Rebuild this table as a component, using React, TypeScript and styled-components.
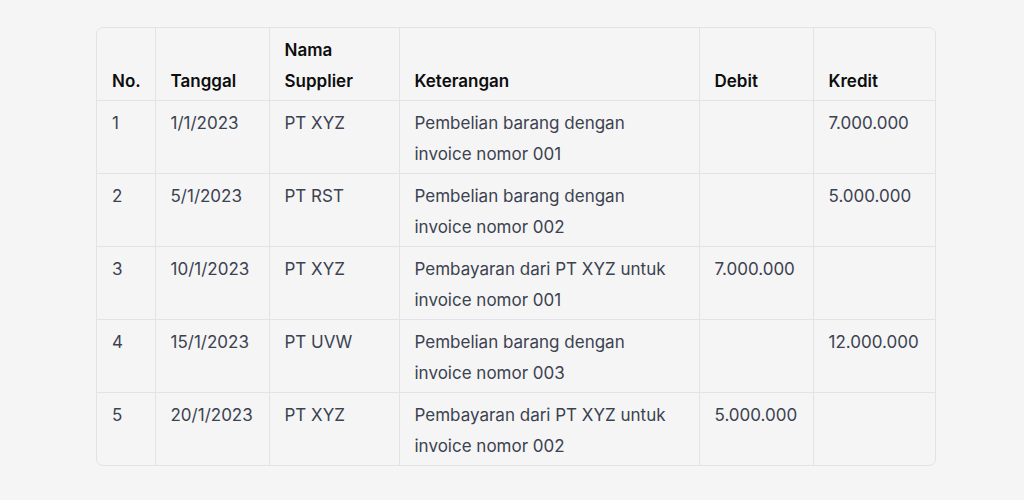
import React from 'react'
import styled, { createGlobalStyle } from 'styled-components'

const GlobalStyle = createGlobalStyle`
  html, body {
    margin: 0;
    padding: 0;
    background: #f5f5f5;
  }
  body {
    font-family: Inter, 'Noto Sans', 'Liberation Sans', sans-serif;
    -webkit-font-smoothing: antialiased;
  }
`

const Page = styled.div`
  width: 1024px;
  height: 500px;
  box-sizing: border-box;
  padding: 27px 0 0 96px;
`

const TableWrap = styled.div`
  width: 840px;
  box-sizing: border-box;
  border: 1px solid #e3e3e7;
  border-radius: 7px;
  overflow: hidden;
`

const Table = styled.table`
  width: 100%;
  border-collapse: collapse;
  table-layout: fixed;
  font-size: 17px;
  line-height: 31px;
`

const Th = styled.th`
  text-align: left;
  vertical-align: bottom;
  font-weight: 600;
  color: #0d0d0d;
  padding: 7px 15px 3px 15px;
  border-right: 1px solid #e3e3e7;
  border-bottom: 1px solid #e3e3e7;
  &:last-child {
    border-right: none;
  }
`

const Row = styled.tr`
  &:last-child td {
    border-bottom: none;
  }
`

const Td = styled.td`
  vertical-align: top;
  color: #3b4250;
  padding: 7px 15px 3px 15px;
  border-right: 1px solid #e3e3e7;
  border-bottom: 1px solid #e3e3e7;
  &:last-child {
    border-right: none;
  }
`

type Entry = {
  no: string
  date: string
  supplier: string
  note: string
  debit: string
  kredit: string
}

const columns = [
  { label: 'No.', width: 58 },
  { label: 'Tanggal', width: 114 },
  { label: 'Nama Supplier', width: 130 },
  { label: 'Keterangan', width: 300 },
  { label: 'Debit', width: 114 },
  { label: 'Kredit', width: 122 },
]

const entries: Entry[] = [
  { no: '1', date: '1/1/2023', supplier: 'PT XYZ', note: 'Pembelian barang dengan invoice nomor 001', debit: '', kredit: '7.000.000' },
  { no: '2', date: '5/1/2023', supplier: 'PT RST', note: 'Pembelian barang dengan invoice nomor 002', debit: '', kredit: '5.000.000' },
  { no: '3', date: '10/1/2023', supplier: 'PT XYZ', note: 'Pembayaran dari PT XYZ untuk invoice nomor 001', debit: '7.000.000', kredit: '' },
  { no: '4', date: '15/1/2023', supplier: 'PT UVW', note: 'Pembelian barang dengan invoice nomor 003', debit: '', kredit: '12.000.000' },
  { no: '5', date: '20/1/2023', supplier: 'PT XYZ', note: 'Pembayaran dari PT XYZ untuk invoice nomor 002', debit: '5.000.000', kredit: '' },
]

const App = () => {
  return (
    <Page>
      <GlobalStyle />
      <TableWrap>
        <Table>
          <colgroup>
            {columns.map((c) => (
              <col key={c.label} style={{ width: c.width }} />
            ))}
          </colgroup>
          <thead>
            <tr>
              {columns.map((c) => (
                <Th key={c.label}>{c.label}</Th>
              ))}
            </tr>
          </thead>
          <tbody>
            {entries.map((e) => (
              <Row key={e.no}>
                <Td>{e.no}</Td>
                <Td>{e.date}</Td>
                <Td>{e.supplier}</Td>
                <Td>{e.note}</Td>
                <Td>{e.debit}</Td>
                <Td>{e.kredit}</Td>
              </Row>
            ))}
          </tbody>
        </Table>
      </TableWrap>
    </Page>
  )
}

export default App
